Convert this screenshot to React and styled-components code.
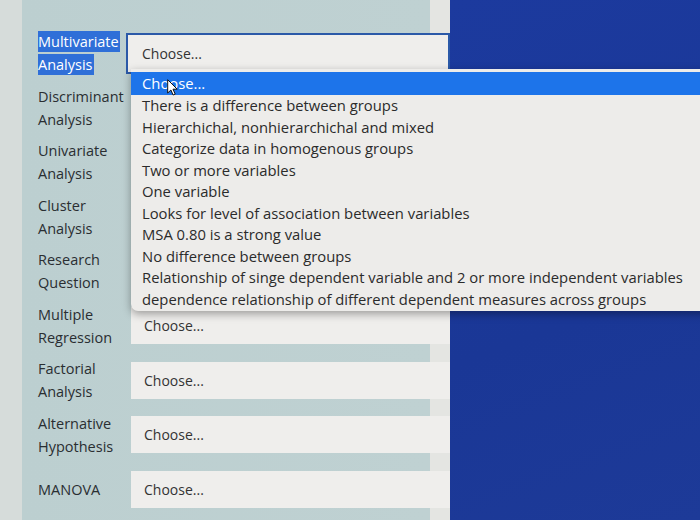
import React from "react";
import styled, { createGlobalStyle } from "styled-components";

const GlobalStyle = createGlobalStyle`
  html, body {
    margin: 0;
    padding: 0;
    background: #1b3899;
  }
  * {
    box-sizing: border-box;
  }
`;

// whole window
const Page = styled.div`
  position: relative;
  display: flex;
  width: 700px;
  height: 520px;
  overflow: hidden;
  font-family: "Open Sans", "Lato", sans-serif;
  font-size: 14.5px;
  color: #2a2e32;
`;

// light strip at far left
const Margin = styled.div`
  width: 22px;
  background: #d6dcda;
`;

// quiz panel with pale strip on the right side
const Panel = styled.div`
  width: 428px;
  padding-left: 16px;
  background: linear-gradient(to right, #bccfd0 0, #bfd1d2 408px, #e4e5e2 408px);
  display: flex;
  flex-direction: column;
`;

const Desktop = styled.div`
  flex: 1;
  background: linear-gradient(160deg, #1c3a9e 0%, #1a3796 60%, #1d3a98 100%);
`;

// bottom of the previous selected line
const TopSelection = styled.div`
  width: 128px;
  height: 5px;
  background: #2e6bd3;
  margin-bottom: 26px;
`;

const Row = styled.div`
  display: grid;
  grid-template-columns: 93px 1fr;
  align-items: center;
  height: 54.5px;
  flex-shrink: 0;
`;

const Label = styled.div`
  line-height: 23px;
`;

const Selected = styled.span`
  background: #2f6fd8;
  color: #fff;
  box-decoration-break: clone;
  -webkit-box-decoration-break: clone;
  padding: 1px 1px 1px 0;
`;

const Select = styled.div`
  height: ${(p) => (p.$focused ? "41px" : "37px")};
  margin-left: ${(p) => (p.$focused ? "-5px" : "0")};
  display: flex;
  align-items: center;
  padding-left: ${(p) => (p.$focused ? "14px" : "13px")};
  background: #efeeec;
  border: ${(p) => (p.$focused ? "2px solid #2b59a8" : "none")};
  font-size: 14px;
  color: #333;
`;

// open list of options
const Dropdown = styled.div`
  position: absolute;
  left: 131px;
  top: 69px;
  width: 580px;
  padding: 3px 0 1px;
  background: #edecea;
  border-radius: 0 0 7px 7px;
  box-shadow: 0 3px 8px rgba(0, 0, 0, 0.35);
  font-size: 14.8px;
  z-index: 2;
`;

const Option = styled.div`
  position: relative;
  height: ${(p) => (p.$active ? "23px" : "21.5px")};
  line-height: ${(p) => (p.$active ? "23px" : "21.5px")};
  padding-left: 11px;
  background: ${(p) => (p.$active ? "#1d74ea" : "transparent")};
  color: ${(p) => (p.$active ? "#fff" : "#2b2b2b")};
  white-space: nowrap;
`;

const Cursor = styled.svg`
  position: absolute;
  left: 36px;
  top: 7px;
`;

const rows = [
  ["Discriminant", "Analysis"],
  ["Univariate", "Analysis"],
  ["Cluster", "Analysis"],
  ["Research", "Question"],
  ["Multiple", "Regression"],
  ["Factorial", "Analysis"],
  ["Alternative", "Hypothesis"],
  ["MANOVA"],
  ["Null"],
];

const options = [
  "There is a difference between groups",
  "Hierarchichal, nonhierarchichal and mixed",
  "Categorize data in homogenous groups",
  "Two or more variables",
  "One variable",
  "Looks for level of association between variables",
  "MSA 0.80 is a strong value",
  "No difference between groups",
  "Relationship of singe dependent variable and 2 or more independent variables",
  "dependence relationship of different dependent measures across groups",
];

export default function App() {
  return (
    <Page>
      <GlobalStyle />
      <Margin />
      <Panel>
        <TopSelection />
        <Row>
          <Label>
            <Selected>
              Multivariate
              <br />
              Analysis
            </Selected>
          </Label>
          <Select $focused>Choose...</Select>
        </Row>
        {rows.map((lines) => (
          <Row key={lines.join(" ")}>
            <Label>
              {lines.map((l, i) => (
                <React.Fragment key={l}>
                  {i > 0 && <br />}
                  {l}
                </React.Fragment>
              ))}
            </Label>
            <Select>Choose...</Select>
          </Row>
        ))}
      </Panel>
      <Desktop />
      <Dropdown>
        <Option $active>
          Choose...
          <Cursor width="11" height="17" viewBox="0 0 11 17">
            <path
              d="M0.7 0.7 L0.7 14 L3.9 11 L6.1 16 L8.2 15.1 L6 10.2 L10.2 10.2 Z"
              fill="#fff"
              stroke="#111"
              strokeWidth="1"
              strokeLinejoin="round"
            />
          </Cursor>
        </Option>
        {options.map((o) => (
          <Option key={o}>{o}</Option>
        ))}
      </Dropdown>
    </Page>
  );
}
